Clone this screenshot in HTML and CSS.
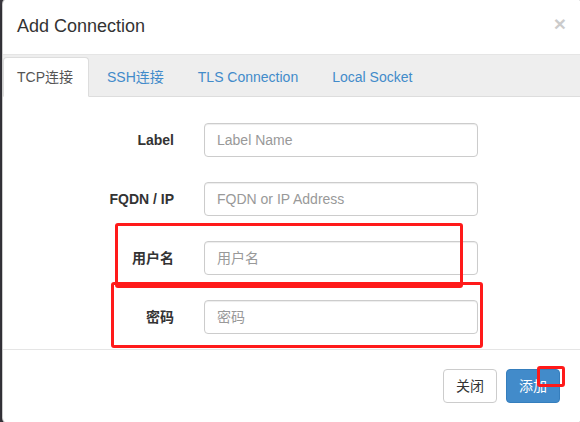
FILE: index.html
```html
<!DOCTYPE html>
<html lang="zh">
<head>
<meta charset="utf-8">
<title>Add Connection</title>
<link rel="stylesheet" href="styles.css">
</head>
<body>
<div class="modal">
  <div class="modal-header">
    <button class="close" type="button">×</button>
    <h4 class="modal-title">Add Connection</h4>
  </div>
  <ul class="nav-tabs">
    <li class="active"><a>TCP连接</a></li>
    <li><a>SSH连接</a></li>
    <li><a>TLS Connection</a></li>
    <li><a>Local Socket</a></li>
  </ul>
  <div class="modal-body">
    <form class="form">
      <label class="control-label">Label</label>
      <input class="form-control" type="text" placeholder="Label Name">
      <label class="control-label">FQDN / IP</label>
      <input class="form-control" type="text" placeholder="FQDN or IP Address">
      <label class="control-label">用户名</label>
      <input class="form-control" type="text" placeholder="用户名">
      <label class="control-label">密码</label>
      <input class="form-control" type="password" placeholder="密码">
    </form>
  </div>
  <div class="modal-footer">
    <button class="btn btn-default" type="button">关闭</button>
    <button class="btn btn-primary" type="button">添加</button>
  </div>
</div>
<div class="mark mark-user"></div>
<div class="mark mark-pass"></div>
<div class="mark mark-add"></div>
</body>
</html>
```

FILE: styles.css
```css
html, body {
  margin: 0;
  padding: 0;
  overflow: hidden;
  height: 422px;
}
body {
  position: relative;
  background: #3f3d45;
  font-family: "Liberation Sans", "Noto Sans CJK SC", sans-serif;
  font-size: 14px;
  line-height: 20px;
  color: #333;
}
.modal {
  box-sizing: border-box;
  width: 580px;
  margin: -2px 0 0 2px;
  background: #fff;
  border: 1px solid rgba(0, 0, 0, 0.2);
  border-radius: 6px;
  box-shadow: 0 3px 9px rgba(0, 0, 0, 0.5);
}
.modal-header {
  padding: 15px 15px 15px 14px;
  border-bottom: 1px solid #e5e5e5;
}
.modal-title {
  margin: 0;
  font-size: 18px;
  line-height: 25px;
  font-weight: 500;
  color: #333;
}
.close {
  float: right;
  margin-top: -1px;
  padding: 0;
  border: 0;
  background: transparent;
  font-family: "Liberation Sans", sans-serif;
  font-size: 21px;
  font-weight: bold;
  line-height: 1;
  color: #000;
  opacity: 0.2;
}
.nav-tabs {
  display: flex;
  margin: 0;
  padding: 2px 0 0;
  list-style: none;
  background: #eee;
  border-bottom: 1px solid #ddd;
}
.nav-tabs li {
  margin: 0 2px -1px 0;
}
.nav-tabs a {
  display: block;
  padding: 9px 15px;
  line-height: 20px;
  border: 1px solid transparent;
  border-radius: 4px 4px 0 0;
  color: #428bca;
}
.nav-tabs .active a {
  padding-left: 13px;
  color: #555;
  background: #fff;
  border-color: #ddd #ddd transparent;
}
.modal-body {
  padding: 26px 0 15px;
}
.form {
  display: grid;
  grid-template-columns: 171px 274px;
  column-gap: 30px;
  row-gap: 25px;
  align-items: center;
}
.control-label {
  text-align: right;
  font-weight: bold;
}
.form-control {
  box-sizing: border-box;
  width: 274px;
  height: 34px;
  margin: 0;
  padding: 6px 12px;
  font-family: inherit;
  font-size: 14px;
  color: #555;
  background: #fff;
  border: 1px solid #ccc;
  border-radius: 4px;
  box-shadow: inset 0 1px 1px rgba(0, 0, 0, 0.075);
}
.form-control::placeholder {
  color: #999;
}
.modal-footer {
  display: flex;
  justify-content: flex-end;
  gap: 9px;
  padding: 19px 21px 20px;
  border-top: 1px solid #e5e5e5;
}
.btn {
  padding: 6px 12px;
  font-family: inherit;
  font-size: 14px;
  line-height: 20px;
  border: 1px solid transparent;
  border-radius: 4px;
}
.btn-default {
  color: #333;
  background: #fff;
  border-color: #ccc;
}
.btn-primary {
  color: #fff;
  background: #428bca;
  border-color: #357ebd;
}
.mark {
  position: absolute;
  box-sizing: border-box;
  border: 3px solid #ff1a1a;
  border-radius: 3px;
}
.mark-user {
  left: 115px;
  top: 223px;
  width: 348px;
  height: 65px;
}
.mark-pass {
  left: 111px;
  top: 282px;
  width: 372px;
  height: 66px;
}
.mark-add {
  left: 537px;
  top: 366px;
  width: 28px;
  height: 21px;
}
```
